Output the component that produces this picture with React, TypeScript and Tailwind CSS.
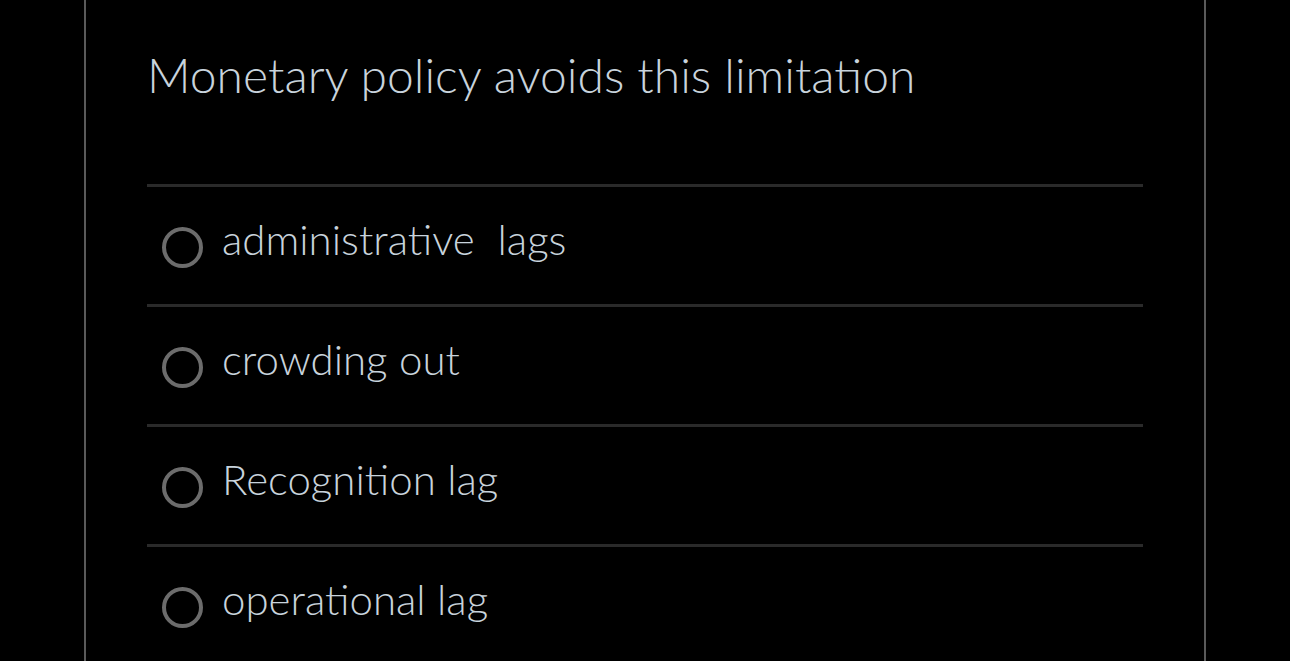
import React from "react";

const options = ["administrative\u00a0 lags", "crowding out", "Recognition lag", "operational lag"];

export default function App() {
  return (
    <div className="w-full h-[661px] bg-black overflow-hidden flex" style={{ fontFamily: "Lato, 'Noto Sans', sans-serif" }}>
      <div className="ml-[84px] w-[1122px] h-full border-x-2 border-[#5a5a5a] pl-[61px] pr-[61px] flex flex-col">
        <h1 className="pt-[46px] text-[48px] leading-[58px] font-light text-[#c8d3dc] mb-[80px] whitespace-nowrap">
          Monetary policy avoids this limitation
        </h1>
        <div className="flex flex-col">
          {options.map((o) => (
            <div key={o} className="h-[120px] border-t-[3px] border-[#2a2a2a] flex items-center">
              <span className="ml-[15px] mt-[4px] w-[41px] h-[41px] rounded-full border-4 border-[#6c6c6c] shrink-0" />
              <span className="ml-[19px] mb-[13px] text-[42px] leading-[50px] font-light text-[#c8d3dc] whitespace-nowrap">{o}</span>
            </div>
          ))}
        </div>
      </div>
    </div>
  );
}
